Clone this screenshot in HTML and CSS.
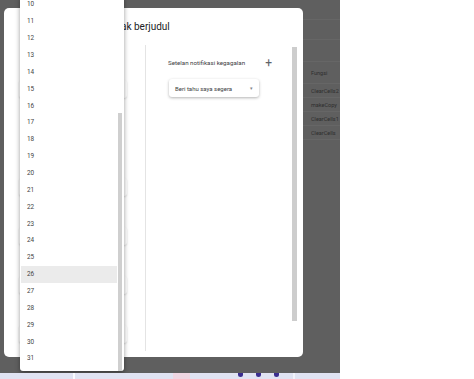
FILE: index.html
```html
<!DOCTYPE html>
<html lang="id">
  <head>
    <meta charset="utf-8" />
    <title>Tambahkan Pemicu</title>
    <link rel="stylesheet" href="styles.css">
  </head>
  <body>
    <div class="screen">
      <div class="desk">
        <div class="sheet">
          <div class="row row-head"></div>
          <div class="row row-head"></div>
          <div class="row row-head tall"></div>
          <div class="row tall">Fungsi</div>
          <div class="row">ClearCells2</div>
          <div class="row">makeCopy</div>
          <div class="row">ClearCells1</div>
          <div class="row">ClearCells</div>
        </div>

        <div class="dialog">
          <h1 class="dialog-title">Pemicu Proyek tak berjudul</h1>
          <div class="dialog-body">
            <!-- fields under the open menu: only their edges show -->
            <div class="col-left">
              <div class="select"></div>
              <div class="select gap-lg"></div>
              <div class="select"></div>
              <div class="select"></div>
              <div class="select"></div>
            </div>
            <div class="col-right">
              <div class="col-right-inner">
                <div class="notify-head">
                  <span>Setelan notifikasi kegagalan</span>
                  <span class="plus">+</span>
                </div>
                <div class="select select-notify">
                  <span>Beri tahu saya segera</span>
                  <span class="caret">&#9662;</span>
                </div>
              </div>
              <div class="track"><div class="thumb"></div></div>
            </div>
          </div>
        </div>

        <div class="menu">
          <ul class="menu-list">
            <li>10</li><li>11</li><li>12</li><li>13</li><li>14</li><li>15</li>
            <li>16</li><li>17</li><li>18</li><li>19</li><li>20</li><li>21</li>
            <li>22</li><li>23</li><li>24</li><li>25</li>
            <li class="active">26</li>
            <li>27</li><li>28</li><li>29</li><li>30</li><li>31</li>
          </ul>
          <div class="menu-track"><div class="menu-thumb"></div></div>
        </div>
      </div>
      <div class="taskbar">
        <span class="mark"></span>
        <span class="pink"></span>
        <span class="dot"></span>
        <span class="dot"></span>
        <span class="dot"></span>
        <span class="mark mark-end"></span>
      </div>
    </div>
  </body>
</html>
```

FILE: styles.css
```css
html {
  font-family: Roboto, "Liberation Sans", sans-serif;
}

body {
  margin: 0;
  width: 474px;
  height: 379px;
  display: flex;
  background-color: white;
  overflow: hidden;
}

.screen {
  width: 340px;
  height: 379px;
  flex-shrink: 0;
  display: flex;
  flex-direction: column;
}

.desk {
  position: relative;
  flex: 1;
  background-color: #5f5f5f;
  overflow: hidden;
}

.taskbar {
  height: 6px;
  display: flex;
  align-items: flex-start;
  padding-left: 73px;
  background-color: #e0e3f2;
}

.taskbar .mark {
  width: 2px;
  height: 6px;
  background-color: #fafbff;
}

.taskbar .mark-end {
  margin-left: 14px;
  background-color: #f2f3fb;
}

.taskbar .pink {
  width: 17px;
  height: 6px;
  margin-left: 98px;
  background-color: #efd6e2;
}

.taskbar .dot {
  width: 5px;
  height: 4px;
  border-radius: 0 0 3px 3px;
  margin-left: 13px;
  background-color: #3a2d8f;
}

.taskbar .pink + .dot {
  margin-left: 48px;
}

/* sheet behind the overlay */

.sheet {
  margin-left: 303px;
  font-size: 5.5px;
  color: #2e2e2e;
}

.row {
  height: 13px;
  padding-left: 8px;
  display: flex;
  align-items: center;
  border-bottom: 1px solid #666;
  white-space: nowrap;
  overflow: hidden;
}

.row-head {
  height: 19px;
}

.row.tall {
  height: 21px;
}

/* dialog */

.dialog {
  position: absolute;
  left: 4px;
  top: 8px;
  width: 299px;
  height: 349px;
  display: flex;
  flex-direction: column;
  background-color: white;
  border-radius: 5px;
}

.dialog-title {
  margin: 0;
  height: 37px;
  padding-left: 45px;
  display: flex;
  align-items: center;
  font-size: 10px;
  font-weight: 400;
  color: #202124;
  white-space: nowrap;
  overflow: hidden;
}

.dialog-body {
  flex: 1;
  display: flex;
  padding-bottom: 6px;
}

.col-left {
  width: 142px;
  box-sizing: border-box;
  padding: 35px 0 0 15px;
  display: flex;
  flex-direction: column;
  gap: 31px;
  border-right: 1px solid #e4e4e4;
}

.select {
  height: 18px;
  display: flex;
  align-items: center;
  padding: 0 6px;
  border-radius: 3px;
  background-color: white;
  box-shadow: 0 1px 3px rgba(0, 0, 0, 0.3);
  color: #3c4043;
  font-size: 6px;
}

.col-left .select {
  width: 108px;
  padding: 0;
  box-shadow: 0 1px 2px rgba(0, 0, 0, 0.14);
}

.col-left .gap-lg {
  margin-top: 49px;
}

.col-right {
  flex: 1;
  display: flex;
  padding-top: 2px;
}

.col-right-inner {
  flex: 1;
  padding: 11px 0 0 22px;
}

.notify-head {
  width: 104px;
  height: 10px;
  display: flex;
  justify-content: space-between;
  align-items: center;
  font-size: 6.2px;
  color: #3c4043;
  white-space: nowrap;
}

.plus {
  font-size: 12px;
  font-weight: 400;
  color: #5f6368;
  line-height: 10px;
}

.select-notify {
  width: 78px;
  margin: 11px 0 0 1px;
  justify-content: space-between;
}

.caret {
  font-size: 5px;
  color: #80868b;
}

.track {
  width: 5px;
  margin-right: 6px;
  display: flex;
  flex-direction: column;
}

.thumb {
  height: 274px;
  background-color: #cdcdcd;
}

/* open dropdown */

.menu {
  position: absolute;
  left: 20px;
  top: -4px;
  width: 104px;
  height: 375px;
  display: flex;
  background-color: white;
  border-radius: 0 0 3px 3px;
  box-shadow: 0 2px 5px rgba(0, 0, 0, 0.4);
}

.menu-list {
  flex: 1;
  margin: 0;
  padding: 0 0 0 1px;
  list-style: none;
}

.menu-list li {
  height: 16.86px;
  display: flex;
  align-items: center;
  padding-left: 6px;
  font-size: 6.4px;
  color: #444;
}

.menu-list li.active {
  background-color: #ebebeb;
}

.menu-track {
  width: 6px;
  display: flex;
  flex-direction: column;
  padding-left: 1px;
}

.menu-thumb {
  flex: 1;
  width: 4px;
  margin-top: 117px;
  background-color: #cfcfcf;
}
```
